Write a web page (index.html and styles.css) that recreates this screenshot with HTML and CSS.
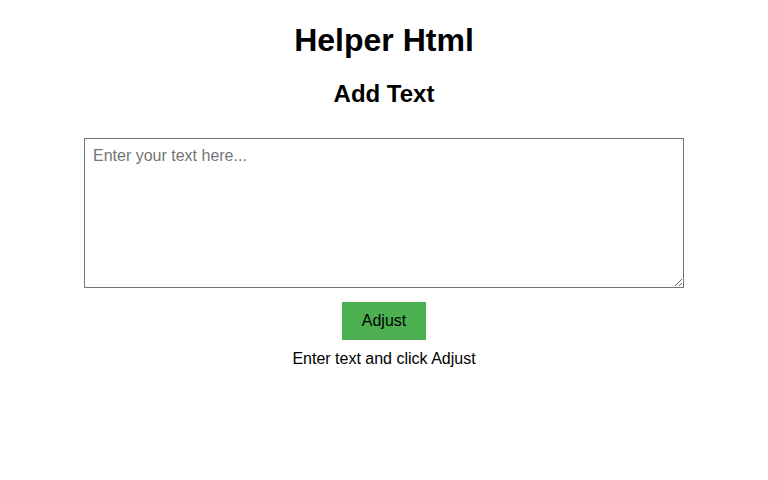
FILE: index.html
```html
<!DOCTYPE html>
<html>
<head>
<meta charset="utf-8">
<link rel="stylesheet" href="styles.css">
</head>
<body>
<h1 class="title">Helper Html</h1>
<h2 class="subtitle">Add Text</h2>
<div class="form">
  <textarea class="input" placeholder="Enter your text here..."></textarea>
  <button class="btn">Adjust</button>
  <div class="status">Enter text and click Adjust</div>
</div>
</body>
</html>
```
FILE: styles.css
```css
html, body {
  margin: 0;
  background: #fff;
}
body {
  font-family: "Liberation Sans", Arial, sans-serif;
  color: #000;
  text-align: center;
}
.title {
  font-size: 32px;
  margin: 22px 0 21px;
}
.subtitle {
  font-size: 24px;
  margin: 21px 0 0;
}
.form {
  display: flex;
  flex-direction: column;
  align-items: center;
  padding-top: 30px;
}
.input {
  box-sizing: border-box;
  width: 600px;
  height: 150px;
  padding: 8px;
  border: 1px solid #767676;
  font-family: "Liberation Sans", Arial, sans-serif;
  font-size: 16px;
  margin: 0;
}
.input::placeholder {
  color: #757575;
}
.btn {
  margin-top: 14px;
  background: #4CAF50;
  color: #000;
  border: none;
  padding: 10px 20px;
  font-family: "Liberation Sans", Arial, sans-serif;
  font-size: 16px;
  line-height: 18px;
}
.status {
  margin-top: 10px;
  font-size: 16px;
}
```
